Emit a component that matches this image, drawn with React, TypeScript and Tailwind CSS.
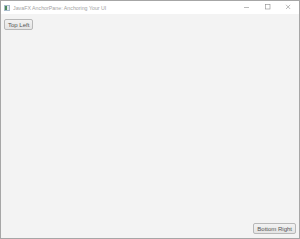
export default function App() {
  return (
    <div className="w-[300px] h-[239px] flex flex-col border border-[#a6a6a6] bg-[#f3f3f3] font-['Liberation_Sans',Arial,sans-serif]">
      {/* Title bar */}
      <div className="h-[13px] bg-white flex items-center shrink-0">
        <svg width="6" height="6" viewBox="0 0 6 6" className="ml-[3px]">
          <rect x="0" y="0" width="6" height="6" fill="#a9bccc" />
          <rect x="1" y="1" width="2" height="4" fill="#4d8a5c" />
          <rect x="3" y="1" width="2" height="4" fill="#e3eaf0" />
        </svg>
        <span className="ml-[3px] text-[6px] leading-none text-[#a3a3a3] origin-left scale-[0.88] whitespace-nowrap">JavaFX AnchorPane: Anchoring Your UI</span>
        <svg width="60" height="13" viewBox="0 0 60 13" className="ml-auto">
          <line x1="5" y1="6.5" x2="10" y2="6.5" stroke="#8c8c8c" strokeWidth="0.6" />
          <rect x="26.5" y="3.5" width="4.5" height="4.5" fill="none" stroke="#8c8c8c" strokeWidth="0.6" />
          <path d="M47 3.8l4.2 4.2M51.2 3.8l-4.2 4.2" stroke="#8c8c8c" strokeWidth="0.6" />
        </svg>
      </div>
      {/* Content */}
      <div className="flex-1 flex flex-col justify-between pl-[3px] pr-[3px] pt-[5px] pb-[4px]">
        <div className="flex">
          <button className="h-[11px] px-[3px] flex items-center rounded-[2px] border border-[#b8b8b8] bg-gradient-to-b from-[#f2f2f2] to-[#e4e4e4] text-[6px] leading-none text-[#555]">
            Top Left
          </button>
        </div>
        <div className="flex justify-end">
          <button className="h-[11px] px-[3px] flex items-center rounded-[2px] border border-[#b8b8b8] bg-gradient-to-b from-[#f2f2f2] to-[#e4e4e4] text-[6px] leading-none text-[#555]">
            Bottom Right
          </button>
        </div>
      </div>
    </div>
  );
}
